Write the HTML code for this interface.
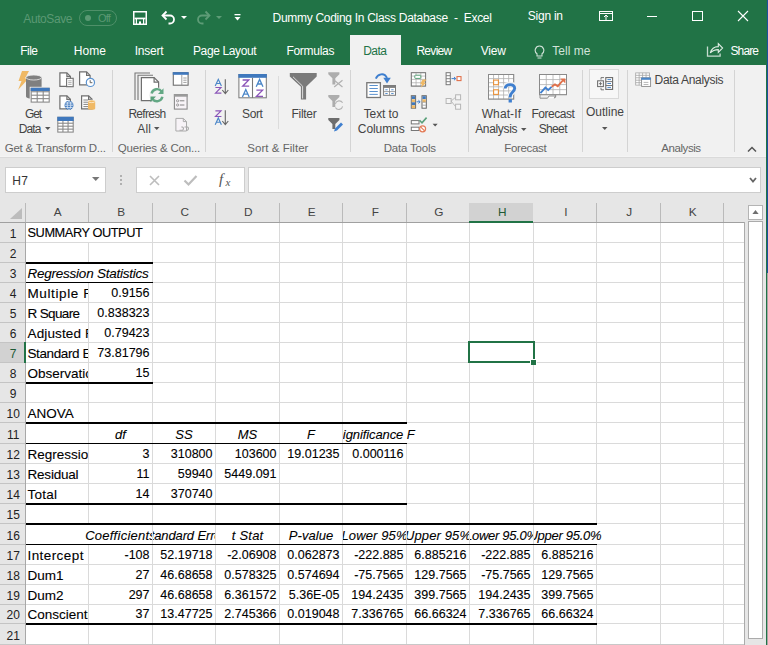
<!DOCTYPE html>
<html><head><meta charset="utf-8"><style>
html,body{margin:0;padding:0;}
body{width:768px;height:645px;overflow:hidden;position:relative;background:#e6e6e6;font-family:"Liberation Sans",sans-serif;}
.t{position:absolute;white-space:nowrap;line-height:1;}
</style></head><body>
<div style="position:absolute;left:0px;top:0px;width:768px;height:65px;background:#217346;"></div>
<div class="t" style="left:23.30px;letter-spacing:-0.405px;top:12.59px;font-size:12px;color:#5b9974;">AutoSave</div>
<div style="position:absolute;left:79px;top:10px;width:38px;height:16px;border:1px solid #4f9069;border-radius:9px;box-sizing:border-box;"></div>
<div style="position:absolute;left:84.5px;top:15px;width:6px;height:6px;border-radius:50%;background:#5b9974;"></div>
<div class="t" style="left:98.00px;letter-spacing:-0.849px;top:12.89px;font-size:11px;color:#5b9974;">Off</div>
<svg style="position:absolute;left:133px;top:11px;" width="14" height="14" viewBox="0 0 14 14"><rect x="0.75" y="0.75" width="12.5" height="12.5" fill="none" stroke="#fff" stroke-width="1.5"/><rect x="1.5" y="6.6" width="11" height="1.7" fill="#fff"/><path d="M3.4 8V13M10.6 8V13" stroke="#fff" stroke-width="1.2"/><rect x="6" y="10.4" width="2" height="2.6" fill="#fff"/></svg>
<svg style="position:absolute;left:160px;top:10px;" width="16" height="15" viewBox="0 0 16 15"><path d="M3 5.5h7a4 4 0 0 1 0 8h-1.5" fill="none" stroke="#fff" stroke-width="1.8"/><path d="M6.5 1.5L2.5 5.5L6.5 9.5" fill="none" stroke="#fff" stroke-width="1.8"/></svg>
<svg style="position:absolute;left:181px;top:16px;" width="6" height="3" viewBox="0 0 6 3"><path d="M0 0h6l-3 3z" fill="#fff"/></svg>
<svg style="position:absolute;left:196px;top:10px;" width="16" height="15" viewBox="0 0 16 15"><path d="M13 5.5h-7a4 4 0 0 0 0 8h1.5" fill="none" stroke="#5e9c77" stroke-width="1.8"/><path d="M9.5 1.5L13.5 5.5L9.5 9.5" fill="none" stroke="#5e9c77" stroke-width="1.8"/></svg>
<svg style="position:absolute;left:216px;top:16px;" width="6" height="3" viewBox="0 0 6 3"><path d="M0 0h6l-3 3z" fill="#5e9c77"/></svg>
<svg style="position:absolute;left:234px;top:14px;" width="7" height="7" viewBox="0 0 7 7"><rect x="0.5" y="0" width="6" height="1.3" fill="#fff"/><path d="M0.5 3h6l-3 3.5z" fill="#fff"/></svg>
<div class="t" style="left:272.50px;letter-spacing:-0.291px;top:11.64px;font-size:12px;color:#fff;">Dummy Coding In Class Database&nbsp; -&nbsp; Excel</div>
<div class="t" style="left:527.80px;letter-spacing:-0.249px;top:10.24px;font-size:12px;color:#fff;">Sign in</div>
<svg style="position:absolute;left:599px;top:11px;" width="14" height="10" viewBox="0 0 14 10"><rect x="0.5" y="0.5" width="13" height="9" fill="none" stroke="#fff" stroke-width="1"/><line x1="0.5" y1="2.5" x2="13.5" y2="2.5" stroke="#fff"/><path d="M7 4v5M5 6l2-2l2 2" fill="none" stroke="#fff" stroke-width="1"/></svg>
<div style="position:absolute;left:647px;top:16px;width:10px;height:1px;background:#fff;"></div>
<div style="position:absolute;left:692px;top:11px;width:11px;height:10px;border:1px solid #fff;box-sizing:border-box;"></div>
<svg style="position:absolute;left:737px;top:10px;" width="12" height="12" viewBox="0 0 12 12"><path d="M1 1L11 11M11 1L1 11" stroke="#fff" stroke-width="1.1"/></svg>
<div style="position:absolute;left:766px;top:0px;width:1px;height:645px;background:#217346;"></div>
<div style="position:absolute;left:767px;top:0px;width:1px;height:273px;background:#1f4f9c;"></div>
<div style="position:absolute;left:767px;top:273px;width:1px;height:372px;background:#a9a4a4;"></div>
<div style="position:absolute;left:350px;top:35px;width:51px;height:30px;background:#f1f1f1;"></div>
<div class="t" style="left:20.30px;letter-spacing:-0.577px;top:44.84px;font-size:12px;color:#fff;">File</div>
<div class="t" style="left:73.80px;letter-spacing:0.061px;top:44.84px;font-size:12px;color:#fff;">Home</div>
<div class="t" style="left:134.70px;letter-spacing:-0.242px;top:44.84px;font-size:12px;color:#fff;">Insert</div>
<div class="t" style="left:193.00px;letter-spacing:-0.379px;top:44.84px;font-size:12px;color:#fff;">Page Layout</div>
<div class="t" style="left:286.40px;letter-spacing:-0.274px;top:44.84px;font-size:12px;color:#fff;">Formulas</div>
<div class="t" style="left:416.40px;letter-spacing:-0.697px;top:44.84px;font-size:12px;color:#fff;">Review</div>
<div class="t" style="left:480.70px;letter-spacing:-0.175px;top:44.84px;font-size:12px;color:#fff;">View</div>
<div class="t" style="left:552.30px;letter-spacing:0.014px;top:44.84px;font-size:12px;color:#d2e3d9;">Tell me</div>
<div class="t" style="left:730.50px;letter-spacing:-0.879px;top:44.84px;font-size:12px;color:#fff;">Share</div>
<div class="t" style="left:363.20px;letter-spacing:-0.519px;top:44.84px;font-size:12px;color:#217346;">Data</div>
<svg style="position:absolute;left:534px;top:45px;" width="11" height="15" viewBox="0 0 11 15"><path d="M5.5 1a4.3 4.3 0 0 0-2.5 7.8V11h5V8.8A4.3 4.3 0 0 0 5.5 1z" fill="none" stroke="#d2e3d9" stroke-width="1.1"/><line x1="3.5" y1="13" x2="7.5" y2="13" stroke="#d2e3d9"/></svg>
<svg style="position:absolute;left:706px;top:42px;" width="18" height="16" viewBox="0 0 18 16"><path d="M1.5 4.5V14.2H14.1V11.5" fill="none" stroke="#c5dccf" stroke-width="1.3"/><path d="M4.3 11C5.5 6.5 8.5 4.6 12.3 4.6V1.6L16.6 6L12.3 10.4V7.6C9.3 7.6 6.5 8.5 4.3 11Z" fill="none" stroke="#e2eee7" stroke-width="1.1"/></svg>
<div style="position:absolute;left:0px;top:65px;width:766px;height:91px;background:#f1f1f1;"></div>
<div style="position:absolute;left:0px;top:156px;width:766px;height:1px;background:#f4f4f4;"></div>
<div style="position:absolute;left:0px;top:157px;width:766px;height:1px;background:#dadada;"></div>
<div style="position:absolute;left:0px;top:158px;width:766px;height:45px;background:#e6e6e6;"></div>
<div style="position:absolute;left:112px;top:70px;width:1px;height:82px;background:#d4d4d4;"></div>
<div style="position:absolute;left:205px;top:70px;width:1px;height:82px;background:#d4d4d4;"></div>
<div style="position:absolute;left:350px;top:70px;width:1px;height:82px;background:#d4d4d4;"></div>
<div style="position:absolute;left:468px;top:70px;width:1px;height:82px;background:#d4d4d4;"></div>
<div style="position:absolute;left:582px;top:70px;width:1px;height:82px;background:#d4d4d4;"></div>
<div style="position:absolute;left:627px;top:70px;width:1px;height:82px;background:#d4d4d4;"></div>
<div style="position:absolute;left:734px;top:70px;width:1px;height:82px;background:#d4d4d4;"></div>
<div style="position:absolute;left:278px;top:76px;width:1px;height:53px;background:#dcdcdc;"></div>
<div class="t" style="left:4.70px;letter-spacing:-0.218px;top:143.07px;font-size:11.5px;color:#666;">Get &amp; Transform D...</div>
<div class="t" style="left:117.80px;letter-spacing:-0.167px;top:143.07px;font-size:11.5px;color:#666;">Queries &amp; Con...</div>
<div class="t" style="left:247.30px;letter-spacing:0.033px;top:143.07px;font-size:11.5px;color:#666;">Sort &amp; Filter</div>
<div class="t" style="left:383.70px;letter-spacing:-0.192px;top:143.07px;font-size:11.5px;color:#666;">Data Tools</div>
<div class="t" style="left:504.30px;letter-spacing:-0.334px;top:143.07px;font-size:11.5px;color:#666;">Forecast</div>
<div class="t" style="left:661.30px;letter-spacing:-0.432px;top:143.07px;font-size:11.5px;color:#666;">Analysis</div>
<div class="t" style="left:25.00px;letter-spacing:-1.072px;top:107.54px;font-size:12px;color:#444;">Get</div>
<div class="t" style="left:18.75px;letter-spacing:-0.902px;top:123.14px;font-size:12px;color:#444;">Data</div>
<div class="t" style="left:128.40px;letter-spacing:-0.694px;top:107.54px;font-size:12px;color:#444;">Refresh</div>
<div class="t" style="left:137.30px;letter-spacing:0.184px;top:123.14px;font-size:12px;color:#444;">All</div>
<div class="t" style="left:242.00px;letter-spacing:-0.369px;top:107.54px;font-size:12px;color:#444;">Sort</div>
<div class="t" style="left:291.40px;letter-spacing:-0.253px;top:107.54px;font-size:12px;color:#444;">Filter</div>
<div class="t" style="left:363.70px;letter-spacing:-0.109px;top:107.54px;font-size:12px;color:#444;">Text to</div>
<div class="t" style="left:357.80px;letter-spacing:-0.075px;top:123.14px;font-size:12px;color:#444;">Columns</div>
<div class="t" style="left:481.70px;letter-spacing:0.100px;top:107.54px;font-size:12px;color:#444;">What-If</div>
<div class="t" style="left:475.20px;letter-spacing:-0.341px;top:123.14px;font-size:12px;color:#444;">Analysis</div>
<div class="t" style="left:531.40px;letter-spacing:-0.469px;top:107.54px;font-size:12px;color:#444;">Forecast</div>
<div class="t" style="left:538.70px;letter-spacing:-0.639px;top:123.14px;font-size:12px;color:#444;">Sheet</div>
<div class="t" style="left:586.00px;letter-spacing:-0.003px;top:106.04px;font-size:12px;color:#444;">Outline</div>
<div class="t" style="left:654.60px;letter-spacing:-0.317px;top:73.84px;font-size:12px;color:#444;">Data Analysis</div>
<svg style="position:absolute;left:44.5px;top:127.4px;" width="6" height="3.5" viewBox="0 0 6 3.5"><path d="M0 0h5.5l-2.75 3z" fill="#555"/></svg>
<svg style="position:absolute;left:153.5px;top:127.4px;" width="6" height="3.5" viewBox="0 0 6 3.5"><path d="M0 0h5.5l-2.75 3z" fill="#555"/></svg>
<svg style="position:absolute;left:521px;top:127.6px;" width="6" height="3.5" viewBox="0 0 6 3.5"><path d="M0 0h5.5l-2.75 3z" fill="#555"/></svg>
<svg style="position:absolute;left:602px;top:127px;" width="6" height="3.5" viewBox="0 0 6 3.5"><path d="M0 0h5.5l-2.75 3z" fill="#555"/></svg>
<svg style="position:absolute;left:747px;top:146px;" width="10" height="6" viewBox="0 0 10 6"><path d="M1 5.5L5 1.5L9 5.5" fill="none" stroke="#555" stroke-width="1.5"/></svg>
<div style="position:absolute;left:589px;top:69px;width:30px;height:30px;border:1px solid #d9d9d9;background:#f7f7f7;box-sizing:border-box;"></div>
<svg style="position:absolute;left:0;top:0;" width="768" height="160" viewBox="0 0 768 160"><path d="M22 71H29L25 78.5H28.5L18 90L21.5 81H18.5Z" fill="#f0b965"/><path d="M26 77.5V96.5A7.8 2.5 0 0 0 41.6 96.5V77.5Z" fill="#7f7f7f"/><ellipse cx="33.8" cy="77.5" rx="7.8" ry="2.5" fill="#808080" stroke="#eee" stroke-width="0.8"/><rect x="29.7" y="86.8" width="21" height="16.6" fill="#f1f1f1"/><rect x="31.2" y="88.3" width="18" height="13.8" fill="#fff" stroke="#8a8a8a" stroke-width="1.1"/><line x1="37.20" y1="88.3" x2="37.20" y2="102.1" stroke="#8a8a8a" stroke-width="1.1"/><line x1="43.20" y1="88.3" x2="43.20" y2="102.1" stroke="#8a8a8a" stroke-width="1.1"/><line x1="31.2" y1="91.75" x2="49.2" y2="91.75" stroke="#8a8a8a" stroke-width="1.1"/><line x1="31.2" y1="95.20" x2="49.2" y2="95.20" stroke="#8a8a8a" stroke-width="1.1"/><line x1="31.2" y1="98.65" x2="49.2" y2="98.65" stroke="#8a8a8a" stroke-width="1.1"/><rect x="30.7" y="87.8" width="19" height="3.2" fill="#3f78bd"/><path d="M59.9 72.9H66.9L70.4 76.4V86.4H59.9Z" fill="#fff" stroke="#6f6f6f" stroke-width="1.2"/><path d="M66.9 72.9V76.4H70.4" fill="none" stroke="#6f6f6f" stroke-width="1.2"/><rect x="66.6" y="78.3" width="6.6" height="8.4" fill="#fff" stroke="#6f6f6f" stroke-width="1.1"/><path d="M68.2 80.8h3.4M68.2 82.6h3.4M68.2 84.4h3.4" stroke="#999" stroke-width="0.8"/><path d="M79.6 71.9H86.6L90.1 75.4V84.9H79.6Z" fill="#fff" stroke="#6f6f6f" stroke-width="1.2"/><path d="M86.6 71.9V75.4H90.1" fill="none" stroke="#6f6f6f" stroke-width="1.2"/><circle cx="90.4" cy="82.4" r="4.1" fill="#fff" stroke="#5b93d0" stroke-width="1.2"/><path d="M90.2 80.2V82.7H92.4" fill="none" stroke="#555" stroke-width="0.9"/><path d="M59.9 95.8H66.9L70.4 99.3V108.8H59.9Z" fill="#fff" stroke="#6f6f6f" stroke-width="1.2"/><path d="M66.9 95.8V99.3H70.4" fill="none" stroke="#6f6f6f" stroke-width="1.2"/><circle cx="69" cy="105.2" r="4.5" fill="#3f78bd"/><path d="M64.6 105.2H73.4M65.3 103H72.7M65.3 107.4H72.7" stroke="#dbe7f5" stroke-width="0.9"/><ellipse cx="69" cy="105.2" rx="1.8" ry="4.4" fill="none" stroke="#dbe7f5" stroke-width="0.8"/><path d="M81.6 95.8H88.6L92.1 99.3V108.8H81.6Z" fill="#fff" stroke="#6f6f6f" stroke-width="1.2"/><path d="M88.6 95.8V99.3H92.1" fill="none" stroke="#6f6f6f" stroke-width="1.2"/><path d="M83.4 100h5M83.4 102.2h5M83.4 104.4h5M83.4 106.6h5" stroke="#777" stroke-width="0.9"/><path d="M88 101.3V108.4A3.6 1.3 0 0 0 95.2 108.4V101.3Z" fill="#f0b965"/><ellipse cx="91.6" cy="101.3" rx="3.6" ry="1.3" fill="#f0b965" stroke="#fff" stroke-width="0.6"/><rect x="57.8" y="117.3" width="15.4" height="14.8" fill="#fff" stroke="#8a8a8a" stroke-width="1.1"/><line x1="62.93" y1="117.3" x2="62.93" y2="132.1" stroke="#8a8a8a" stroke-width="1.1"/><line x1="68.07" y1="117.3" x2="68.07" y2="132.1" stroke="#8a8a8a" stroke-width="1.1"/><line x1="57.8" y1="120.26" x2="73.2" y2="120.26" stroke="#8a8a8a" stroke-width="1.1"/><line x1="57.8" y1="123.22" x2="73.2" y2="123.22" stroke="#8a8a8a" stroke-width="1.1"/><line x1="57.8" y1="126.18" x2="73.2" y2="126.18" stroke="#8a8a8a" stroke-width="1.1"/><line x1="57.8" y1="129.14" x2="73.2" y2="129.14" stroke="#8a8a8a" stroke-width="1.1"/><rect x="57.3" y="116.8" width="16.4" height="4.2" fill="#3f78bd"/><path d="M135 100V73H150" fill="none" stroke="#777" stroke-width="1.1"/><path d="M138 100V75.3H153" fill="none" stroke="#777" stroke-width="1.1"/><path d="M141.4 77.6H154.1L158.6 82.1V100.6H141.4Z" fill="#fff" stroke="#6f6f6f" stroke-width="1.2"/><path d="M154.1 77.6V82.1H158.6" fill="none" stroke="#6f6f6f" stroke-width="1.2"/><circle cx="157" cy="95.2" r="7.8" fill="#f1f1f1"/><path d="M151.6 93.6A5.6 5.6 0 0 1 161.7 91.6" fill="none" stroke="#63a884" stroke-width="2.4"/><path d="M163.5 88.2V94H158Z" fill="#63a884"/><path d="M162.4 96.8A5.6 5.6 0 0 1 152.3 98.8" fill="none" stroke="#63a884" stroke-width="2.4"/><path d="M150.5 102.2V96.4H156Z" fill="#5aa07a"/><rect x="173.3" y="72.7" width="14.8" height="12.5" fill="#fff" stroke="#6f6f6f" stroke-width="1.1"/><rect x="172.8" y="72.2" width="15.8" height="2.6" fill="#3f78bd"/><path d="M181.8 75V85.2M183.3 78h3.3M183.3 80.2h3.3M183.3 82.4h3.3" stroke="#888" stroke-width="0.8"/><rect x="174.4" y="94.6" width="12.7" height="14.5" fill="#f7f3f7" stroke="#8a8a8a" stroke-width="1.1"/><rect x="173.9" y="94.1" width="13.7" height="2.6" fill="#9a9a9a"/><circle cx="177.6" cy="100.8" r="1.1" fill="none" stroke="#888" stroke-width="0.8"/><circle cx="177.6" cy="105" r="1.1" fill="none" stroke="#888" stroke-width="0.8"/><path d="M179.8 100.8h4.6M179.8 105h4.6" stroke="#777" stroke-width="0.9"/><path d="M175.9 118.4H183.3L186.5 121.60000000000001V131.0H175.9Z" fill="#f7f3f7" stroke="#aaa" stroke-width="1"/><path d="M183.3 118.4V121.60000000000001H186.5" fill="none" stroke="#aaa" stroke-width="1"/><path d="M179.5 130.2h3a1.8 1.8 0 0 0 0-3.2h-1.2M184.5 127h3a1.8 1.8 0 0 1 0 3.2h-1.2" fill="none" stroke="#aaa" stroke-width="1.1"/><path d="M215.2 86.1L218.29999999999998 79.3L221.39999999999998 86.1M216.564 83.51599999999999H220.036" fill="none" stroke="#4a86c8" stroke-width="1.15"/><path d="M215.39999999999998 87.5H220.99999999999997L215.5 93.10000000000001H221.39999999999998" fill="none" stroke="#8b55b8" stroke-width="1.15"/><path d="M225.3 79.2V93.2M222.3 90L225.3 93.6L228.3 90" fill="none" stroke="#666" stroke-width="1.1"/><path d="M215.39999999999998 110.89999999999999H220.99999999999997L215.5 116.5H221.39999999999998" fill="none" stroke="#8b55b8" stroke-width="1.15"/><path d="M215.2 124.8L218.29999999999998 118L221.39999999999998 124.8M216.564 122.216H220.036" fill="none" stroke="#4a86c8" stroke-width="1.15"/><path d="M225.3 110.2V124.2M222.3 121L225.3 124.6L228.3 121" fill="none" stroke="#666" stroke-width="1.1"/><rect x="238.9" y="74.5" width="27.4" height="23.3" fill="#fff" stroke="#777" stroke-width="1"/><rect x="238.4" y="74" width="28.4" height="3.8" fill="#3f78bd"/><line x1="252.5" y1="77.8" x2="252.5" y2="98" stroke="#777" stroke-width="1.1"/><path d="M242.6 80.0H248.8L242.70000000000002 86.20000000000002H249.20000000000002" fill="none" stroke="#8b55b8" stroke-width="1.3"/><path d="M242.4 97.0L245.8 89.6L249.20000000000002 97.0M243.89600000000002 94.18799999999999H247.704" fill="none" stroke="#4a86c8" stroke-width="1.3"/><path d="M256.2 86.80000000000001L259.59999999999997 79.4L263.0 86.80000000000001M257.69599999999997 83.988H261.50399999999996" fill="none" stroke="#4a86c8" stroke-width="1.3"/><path d="M256.4 90.19999999999999H262.6L256.5 96.4H263.0" fill="none" stroke="#8b55b8" stroke-width="1.3"/><path d="M289.8 73.1H316.7V76.4L306.1 86.7V99.6H300.9V86.7L289.8 76.4Z" fill="#7a7a7a"/><path d="M293 76.8L302.6 86.2V98.5" fill="none" stroke="#e8e8e8" stroke-width="0.9"/><path d="M328.3 72.2H339.4V74.2L335.3 78.3V84.5H332.4V78.3L328.3 74.2Z" fill="#adadad"/><path d="M334.2 80.2L342.5 87M342.5 80.2L334.2 87" stroke="#b0b0b0" stroke-width="1.2"/><path d="M328.3 94.9H339.4V96.9L335.3 101V107H332.4V101L328.3 96.9Z" fill="#adadad"/><path d="M335.4 104A3.9 3.9 0 0 1 342.6 102.8M342.6 106.3A3.9 3.9 0 0 1 335.4 107.5" fill="none" stroke="#b5b5b5" stroke-width="1.1"/><path d="M328.3 118H339.4V120L335.3 124.1V129H332.4V124.1L328.3 120Z" fill="#6d6d6d"/><path d="M334 131.6L335 128.6L341 122.6L343 124.6L337 130.6Z" fill="#3f7fcf"/><rect x="366.8" y="82.7" width="13.6" height="14.8" fill="#fff" stroke="#777" stroke-width="1.3"/><path d="M369.4 85.5h8.4M369.4 88.5h8.4M369.4 91.5h8.4M369.4 94.4h8.4" stroke="#4a86c8" stroke-width="0.9"/><rect x="383.6" y="85.5" width="11.9" height="9.8" fill="#fff" stroke="#7a7a7a" stroke-width="1"/><rect x="383.2" y="85.1" width="12.7" height="2.8" fill="#7d7d7d"/><line x1="389.5" y1="88" x2="389.5" y2="95.4" stroke="#888" stroke-width="0.8"/><line x1="383.4" y1="91.6" x2="395.6" y2="91.6" stroke="#888" stroke-width="0.8"/><path d="M385.3 89.8h2.4M391.2 89.8h2.4M385.3 93.5h2.4M391.2 93.5h2.4" stroke="#4a86c8" stroke-width="0.9"/><path d="M375.8 78.6C377.5 74.5 384 71.6 387 78" fill="none" stroke="#3f7fcf" stroke-width="1.9"/><path d="M383.3 77.7L387 83.5L390.8 77.7Z" fill="#3f7fcf"/><rect x="411.3" y="72.7" width="14.3" height="13.4" fill="#fff" stroke="#a8a8a8" stroke-width="0.7"/><line x1="416.07" y1="72.7" x2="416.07" y2="86.10000000000001" stroke="#a8a8a8" stroke-width="0.7"/><line x1="420.83" y1="72.7" x2="420.83" y2="86.10000000000001" stroke="#a8a8a8" stroke-width="0.7"/><line x1="411.3" y1="76.05" x2="425.6" y2="76.05" stroke="#a8a8a8" stroke-width="0.7"/><line x1="411.3" y1="79.40" x2="425.6" y2="79.40" stroke="#a8a8a8" stroke-width="0.7"/><line x1="411.3" y1="82.75" x2="425.6" y2="82.75" stroke="#a8a8a8" stroke-width="0.7"/><rect x="411.3" y="72.7" width="14.3" height="13.4" fill="none" stroke="#7a7a7a" stroke-width="1"/><rect x="414.8" y="75.2" width="6" height="3.2" rx="0.6" fill="#fff" stroke="#58a077" stroke-width="1"/><path d="M422.5 79.5H426.5L424 83H426L420.8 87.8L422 84.2H420.2Z" fill="#f0b965"/><rect x="411.3" y="95.7" width="4.3" height="12.5" fill="#fff" stroke="#666" stroke-width="1"/><rect x="411.8" y="96.2" width="3.3" height="2.9" fill="#3f78bd"/><rect x="411.8" y="99.3" width="3.3" height="2.9" fill="#f0b965"/><rect x="411.8" y="102.3" width="3.3" height="2.9" fill="#3f78bd"/><rect x="411.8" y="105.3" width="3.3" height="2.9" fill="#f0b965"/><rect x="422" y="95.7" width="4.3" height="12.5" fill="#fff" stroke="#666" stroke-width="1"/><rect x="422.5" y="96.2" width="3.3" height="2.9" fill="#3f78bd"/><rect x="422.5" y="99.3" width="3.3" height="2.9" fill="#f0b965"/><path d="M422.5 102.2h3.3M422.5 105.2h3.3" stroke="#888" stroke-width="0.7"/><path d="M416.6 101.8h3.4M418.4 100.2l1.8 1.6l-1.8 1.6" fill="none" stroke="#3f7fcf" stroke-width="1"/><rect x="411.3" y="120.6" width="7.7" height="3.3" fill="#fff" stroke="#777" stroke-width="1"/><rect x="411.3" y="127.2" width="7.7" height="3.3" fill="#fff" stroke="#777" stroke-width="1"/><path d="M419.5 120.3L422 122.8L426.6 117.6" fill="none" stroke="#5aa07a" stroke-width="1.6"/><circle cx="422.6" cy="128.8" r="3" fill="#fff" stroke="#e37a55" stroke-width="1.2"/><path d="M420.6 126.8L424.6 130.8" stroke="#e37a55" stroke-width="1.1"/><path d="M432.6 123.8H437.7L435.15 126.5Z" fill="#555"/><rect x="446.1" y="72.7" width="4.2" height="12" fill="#fff" stroke="#777" stroke-width="1"/><path d="M446.1 75.7h4.2M446.1 78.7h4.2M446.1 81.7h4.2" stroke="#777" stroke-width="0.9"/><path d="M451.5 78.6h4M454 77l1.8 1.6L454 80.2" fill="none" stroke="#3f7fcf" stroke-width="1"/><rect x="457" y="76.6" width="4" height="4" fill="#fff" stroke="#e0704a" stroke-width="1.1"/><rect x="446.1" y="98.5" width="5" height="5" fill="#f5f5f5" stroke="#b5b5b5" stroke-width="1"/><rect x="455.6" y="94.8" width="5" height="5" fill="#f5f5f5" stroke="#b5b5b5" stroke-width="1"/><rect x="455.6" y="104.2" width="5" height="5" fill="#f5f5f5" stroke="#b5b5b5" stroke-width="1"/><path d="M451.1 101L455.6 97.3M451.1 101L455.6 106.7" stroke="#b5b5b5" stroke-width="0.9"/><rect x="488.5" y="74.5" width="25.2" height="24.6" fill="#fff" stroke="#b0b0b0" stroke-width="0.8"/><line x1="493.54" y1="74.5" x2="493.54" y2="99.1" stroke="#b0b0b0" stroke-width="0.8"/><line x1="498.58" y1="74.5" x2="498.58" y2="99.1" stroke="#b0b0b0" stroke-width="0.8"/><line x1="503.62" y1="74.5" x2="503.62" y2="99.1" stroke="#b0b0b0" stroke-width="0.8"/><line x1="508.66" y1="74.5" x2="508.66" y2="99.1" stroke="#b0b0b0" stroke-width="0.8"/><line x1="488.5" y1="78.60" x2="513.7" y2="78.60" stroke="#b0b0b0" stroke-width="0.8"/><line x1="488.5" y1="82.70" x2="513.7" y2="82.70" stroke="#b0b0b0" stroke-width="0.8"/><line x1="488.5" y1="86.80" x2="513.7" y2="86.80" stroke="#b0b0b0" stroke-width="0.8"/><line x1="488.5" y1="90.90" x2="513.7" y2="90.90" stroke="#b0b0b0" stroke-width="0.8"/><line x1="488.5" y1="95.00" x2="513.7" y2="95.00" stroke="#b0b0b0" stroke-width="0.8"/><rect x="488.5" y="74.5" width="25.2" height="24.6" fill="none" stroke="#8a8a8a" stroke-width="1"/><rect x="493.6" y="80.1" width="4.8" height="4.6" fill="#fff" stroke="#e8913a" stroke-width="1.1"/><rect x="493.6" y="89.8" width="4.8" height="4.6" fill="#fff" stroke="#e8913a" stroke-width="1.1"/><path d="M504.6 88.5C504.6 82.5 515.3 82.3 515.3 88.3C515.3 92 510.2 92.3 510.2 96.4" fill="none" stroke="#f1f1f1" stroke-width="5"/><path d="M505.2 88.5C505.2 83.5 514.7 83.3 514.7 88.3C514.7 91.7 510.2 92.3 510.2 96.4V97.5" fill="none" stroke="#3f7fcf" stroke-width="2.9"/><rect x="508.6" y="99.2" width="3.3" height="3.3" fill="#3f7fcf"/><rect x="539.5" y="74.5" width="27" height="20.2" fill="#fff" stroke="#b0b0b0" stroke-width="0.8"/><line x1="546.25" y1="74.5" x2="546.25" y2="94.7" stroke="#b0b0b0" stroke-width="0.8"/><line x1="553.00" y1="74.5" x2="553.00" y2="94.7" stroke="#b0b0b0" stroke-width="0.8"/><line x1="559.75" y1="74.5" x2="559.75" y2="94.7" stroke="#b0b0b0" stroke-width="0.8"/><line x1="539.5" y1="79.55" x2="566.5" y2="79.55" stroke="#b0b0b0" stroke-width="0.8"/><line x1="539.5" y1="84.60" x2="566.5" y2="84.60" stroke="#b0b0b0" stroke-width="0.8"/><line x1="539.5" y1="89.65" x2="566.5" y2="89.65" stroke="#b0b0b0" stroke-width="0.8"/><rect x="539.5" y="74.5" width="27" height="20.2" fill="none" stroke="#8a8a8a" stroke-width="1"/><path d="M540 98.2H547.5L549 96H556L554.5 98.2" fill="#fff" stroke="#8f8f8f" stroke-width="1"/><path d="M540 94.8V98.2M556 94.8L554.5 98.2" stroke="#8f8f8f" stroke-width="1"/><path d="M540.4 93.2L545.4 87.6L548.2 90L551.6 86.8" fill="none" stroke="#3f7fcf" stroke-width="1.8"/><path d="M551.6 86.8L555 84.4L557.8 86.2L563.6 79.5" fill="none" stroke="#e0704a" stroke-width="1.8"/><path d="M560.2 78.4H565.4V83.6Z" fill="#e0704a"/><rect x="597.6" y="80.8" width="5.8" height="5.8" fill="#f7f7f7" stroke="#6a6a6a" stroke-width="1"/><path d="M598.9 83.7h3.2M600.5 82.1v3.2" stroke="#6a6a6a" stroke-width="0.9"/><path d="M601 79.6V77.6H604M601 87.8V89.8H604" fill="none" stroke="#6a6a6a" stroke-width="0.9"/><rect x="605.8" y="77.6" width="6.8" height="11.8" fill="#fff" stroke="#6a6a6a" stroke-width="1.1"/><path d="M605.8 81.6h6.8M605.8 85.5h6.8" stroke="#6a6a6a" stroke-width="0.9"/><path d="M607.4 79.6h3.6M607.4 83.5h3.6M607.4 87.4h3.6" stroke="#4a86c8" stroke-width="1"/><rect x="635.7" y="72.9" width="13.8" height="12.2" fill="#fff" stroke="#a5a5a5" stroke-width="0.8"/><line x1="639.15" y1="72.9" x2="639.15" y2="85.10000000000001" stroke="#a5a5a5" stroke-width="0.8"/><line x1="642.60" y1="72.9" x2="642.60" y2="85.10000000000001" stroke="#a5a5a5" stroke-width="0.8"/><line x1="646.05" y1="72.9" x2="646.05" y2="85.10000000000001" stroke="#a5a5a5" stroke-width="0.8"/><line x1="635.7" y1="75.34" x2="649.5" y2="75.34" stroke="#a5a5a5" stroke-width="0.8"/><line x1="635.7" y1="77.78" x2="649.5" y2="77.78" stroke="#a5a5a5" stroke-width="0.8"/><line x1="635.7" y1="80.22" x2="649.5" y2="80.22" stroke="#a5a5a5" stroke-width="0.8"/><line x1="635.7" y1="82.66" x2="649.5" y2="82.66" stroke="#a5a5a5" stroke-width="0.8"/><rect x="641.6" y="78" width="9" height="8.4" fill="#fff" stroke="#8a8a8a" stroke-width="0.9"/><rect x="641.2" y="77.6" width="9.7" height="2.2" fill="#4a86c8"/><path d="M643.6 82.4h4.8M643.6 84.5h4.8" stroke="#999" stroke-width="0.7"/></svg>
<div style="position:absolute;left:5px;top:167px;width:101px;height:26px;background:#fff;border:1px solid #cdcdcd;box-sizing:border-box;"></div>
<div class="t" style="left:12.20px;letter-spacing:0.364px;top:175.34px;font-size:12px;color:#333;">H7</div>
<svg style="position:absolute;left:92px;top:177px;" width="8" height="4" viewBox="0 0 8 4"><path d="M0 0h7.5l-3.75 4z" fill="#777"/></svg>
<div style="position:absolute;left:120px;top:175px;width:2px;height:2px;background:#b0b0b0;"></div>
<div style="position:absolute;left:120px;top:179px;width:2px;height:2px;background:#b0b0b0;"></div>
<div style="position:absolute;left:120px;top:183px;width:2px;height:2px;background:#b0b0b0;"></div>
<div style="position:absolute;left:136px;top:167px;width:109px;height:26px;background:#fff;border:1px solid #cdcdcd;box-sizing:border-box;"></div>
<svg style="position:absolute;left:148px;top:174px;" width="13" height="13" viewBox="0 0 13 13"><path d="M2 2L11 11M11 2L2 11" stroke="#bdbdbd" stroke-width="1.6"/></svg>
<svg style="position:absolute;left:183px;top:174px;" width="15" height="13" viewBox="0 0 15 13"><path d="M1.5 6.5L5.5 10.5L13.5 2" fill="none" stroke="#bdbdbd" stroke-width="2.2"/></svg>
<div class="t" style="left:219px;top:172px;font-size:15px;color:#555;font-family:'Liberation Serif',serif;font-style:italic;">f</div>
<div class="t" style="left:225.5px;top:177px;font-size:11px;color:#555;font-family:'Liberation Serif',serif;font-style:italic;">x</div>
<div style="position:absolute;left:248px;top:167px;width:513px;height:26px;background:#fff;border:1px solid #cdcdcd;box-sizing:border-box;"></div>
<svg style="position:absolute;left:749px;top:177px;" width="8" height="6" viewBox="0 0 8 6"><path d="M1 1L4 4.5L7 1" fill="none" stroke="#666" stroke-width="1.8"/></svg>
<div style="position:absolute;left:25px;top:222px;width:719px;height:423px;background:#fff;"></div>
<div style="position:absolute;left:88px;top:223px;width:1px;height:422px;background:#dadada;"></div>
<div style="position:absolute;left:152px;top:223px;width:1px;height:422px;background:#dadada;"></div>
<div style="position:absolute;left:215px;top:223px;width:1px;height:422px;background:#dadada;"></div>
<div style="position:absolute;left:279px;top:223px;width:1px;height:422px;background:#dadada;"></div>
<div style="position:absolute;left:342px;top:223px;width:1px;height:422px;background:#dadada;"></div>
<div style="position:absolute;left:406px;top:223px;width:1px;height:422px;background:#dadada;"></div>
<div style="position:absolute;left:469px;top:223px;width:1px;height:422px;background:#dadada;"></div>
<div style="position:absolute;left:533px;top:223px;width:1px;height:422px;background:#dadada;"></div>
<div style="position:absolute;left:596px;top:223px;width:1px;height:422px;background:#dadada;"></div>
<div style="position:absolute;left:660px;top:223px;width:1px;height:422px;background:#dadada;"></div>
<div style="position:absolute;left:723px;top:223px;width:1px;height:422px;background:#dadada;"></div>
<div style="position:absolute;left:26px;top:242px;width:718px;height:1px;background:#dadada;"></div>
<div style="position:absolute;left:26px;top:262px;width:718px;height:1px;background:#dadada;"></div>
<div style="position:absolute;left:26px;top:282px;width:718px;height:1px;background:#dadada;"></div>
<div style="position:absolute;left:26px;top:302px;width:718px;height:1px;background:#dadada;"></div>
<div style="position:absolute;left:26px;top:322px;width:718px;height:1px;background:#dadada;"></div>
<div style="position:absolute;left:26px;top:342px;width:718px;height:1px;background:#dadada;"></div>
<div style="position:absolute;left:26px;top:362px;width:718px;height:1px;background:#dadada;"></div>
<div style="position:absolute;left:26px;top:382px;width:718px;height:1px;background:#dadada;"></div>
<div style="position:absolute;left:26px;top:402px;width:718px;height:1px;background:#dadada;"></div>
<div style="position:absolute;left:26px;top:422px;width:718px;height:1px;background:#dadada;"></div>
<div style="position:absolute;left:26px;top:443px;width:718px;height:1px;background:#dadada;"></div>
<div style="position:absolute;left:26px;top:463px;width:718px;height:1px;background:#dadada;"></div>
<div style="position:absolute;left:26px;top:483px;width:718px;height:1px;background:#dadada;"></div>
<div style="position:absolute;left:26px;top:503px;width:718px;height:1px;background:#dadada;"></div>
<div style="position:absolute;left:26px;top:523px;width:718px;height:1px;background:#dadada;"></div>
<div style="position:absolute;left:26px;top:544px;width:718px;height:1px;background:#dadada;"></div>
<div style="position:absolute;left:26px;top:564px;width:718px;height:1px;background:#dadada;"></div>
<div style="position:absolute;left:26px;top:584px;width:718px;height:1px;background:#dadada;"></div>
<div style="position:absolute;left:26px;top:604px;width:718px;height:1px;background:#dadada;"></div>
<div style="position:absolute;left:26px;top:623px;width:718px;height:1px;background:#dadada;"></div>
<div style="position:absolute;left:26px;top:644px;width:718px;height:1px;background:#dadada;"></div>
<div style="position:absolute;left:25px;top:203px;width:719px;height:19px;background:#e6e6e6;"></div>
<div style="position:absolute;left:469px;top:203px;width:64px;height:19px;background:#d2d2d2;"></div>
<div style="position:absolute;left:88px;top:203px;width:1px;height:19px;background:#bababa;"></div>
<div style="position:absolute;left:152px;top:203px;width:1px;height:19px;background:#bababa;"></div>
<div style="position:absolute;left:215px;top:203px;width:1px;height:19px;background:#bababa;"></div>
<div style="position:absolute;left:279px;top:203px;width:1px;height:19px;background:#bababa;"></div>
<div style="position:absolute;left:342px;top:203px;width:1px;height:19px;background:#bababa;"></div>
<div style="position:absolute;left:406px;top:203px;width:1px;height:19px;background:#bababa;"></div>
<div style="position:absolute;left:596px;top:203px;width:1px;height:19px;background:#bababa;"></div>
<div style="position:absolute;left:660px;top:203px;width:1px;height:19px;background:#bababa;"></div>
<div style="position:absolute;left:723px;top:203px;width:1px;height:19px;background:#bababa;"></div>
<div style="position:absolute;left:25px;top:203px;width:1px;height:19px;background:#bababa;"></div>
<div style="position:absolute;left:0px;top:222px;width:744px;height:1px;background:#a0a0a0;"></div>
<div style="position:absolute;left:469px;top:221px;width:64px;height:2px;background:#217346;"></div>
<div class="t" style="left:27.80px;width:60px;text-align:center;top:207.31px;font-size:11.8px;color:#444;">A</div>
<div class="t" style="left:91.30px;width:60px;text-align:center;top:207.31px;font-size:11.8px;color:#444;">B</div>
<div class="t" style="left:154.80px;width:60px;text-align:center;top:207.31px;font-size:11.8px;color:#444;">C</div>
<div class="t" style="left:218.30px;width:60px;text-align:center;top:207.31px;font-size:11.8px;color:#444;">D</div>
<div class="t" style="left:281.80px;width:60px;text-align:center;top:207.31px;font-size:11.8px;color:#444;">E</div>
<div class="t" style="left:345.30px;width:60px;text-align:center;top:207.31px;font-size:11.8px;color:#444;">F</div>
<div class="t" style="left:408.80px;width:60px;text-align:center;top:207.31px;font-size:11.8px;color:#444;">G</div>
<div class="t" style="left:472.30px;width:60px;text-align:center;top:207.31px;font-size:11.8px;color:#1e5a35;">H</div>
<div class="t" style="left:535.80px;width:60px;text-align:center;top:207.31px;font-size:11.8px;color:#444;">I</div>
<div class="t" style="left:599.30px;width:60px;text-align:center;top:207.31px;font-size:11.8px;color:#444;">J</div>
<div class="t" style="left:662.80px;width:60px;text-align:center;top:207.31px;font-size:11.8px;color:#444;">K</div>
<svg style="position:absolute;left:10px;top:208px;" width="12" height="11" viewBox="0 0 12 11"><path d="M12 0V11H0z" fill="#bcbcbc"/></svg>
<div style="position:absolute;left:0px;top:223px;width:25px;height:422px;background:#e6e6e6;"></div>
<div style="position:absolute;left:0px;top:343px;width:24px;height:19px;background:#d2d2d2;"></div>
<div style="position:absolute;left:0px;top:242px;width:25px;height:1px;background:#c4c4c4;"></div>
<div style="position:absolute;left:0px;top:262px;width:25px;height:1px;background:#c4c4c4;"></div>
<div style="position:absolute;left:0px;top:282px;width:25px;height:1px;background:#c4c4c4;"></div>
<div style="position:absolute;left:0px;top:302px;width:25px;height:1px;background:#c4c4c4;"></div>
<div style="position:absolute;left:0px;top:322px;width:25px;height:1px;background:#c4c4c4;"></div>
<div style="position:absolute;left:0px;top:342px;width:25px;height:1px;background:#c4c4c4;"></div>
<div style="position:absolute;left:0px;top:362px;width:25px;height:1px;background:#c4c4c4;"></div>
<div style="position:absolute;left:0px;top:382px;width:25px;height:1px;background:#c4c4c4;"></div>
<div style="position:absolute;left:0px;top:402px;width:25px;height:1px;background:#c4c4c4;"></div>
<div style="position:absolute;left:0px;top:422px;width:25px;height:1px;background:#c4c4c4;"></div>
<div style="position:absolute;left:0px;top:443px;width:25px;height:1px;background:#c4c4c4;"></div>
<div style="position:absolute;left:0px;top:463px;width:25px;height:1px;background:#c4c4c4;"></div>
<div style="position:absolute;left:0px;top:483px;width:25px;height:1px;background:#c4c4c4;"></div>
<div style="position:absolute;left:0px;top:503px;width:25px;height:1px;background:#c4c4c4;"></div>
<div style="position:absolute;left:0px;top:523px;width:25px;height:1px;background:#c4c4c4;"></div>
<div style="position:absolute;left:0px;top:544px;width:25px;height:1px;background:#c4c4c4;"></div>
<div style="position:absolute;left:0px;top:564px;width:25px;height:1px;background:#c4c4c4;"></div>
<div style="position:absolute;left:0px;top:584px;width:25px;height:1px;background:#c4c4c4;"></div>
<div style="position:absolute;left:0px;top:604px;width:25px;height:1px;background:#c4c4c4;"></div>
<div style="position:absolute;left:0px;top:623px;width:25px;height:1px;background:#c4c4c4;"></div>
<div style="position:absolute;left:0px;top:644px;width:25px;height:1px;background:#c4c4c4;"></div>
<div style="position:absolute;left:25px;top:222px;width:1px;height:423px;background:#a8a8a8;"></div>
<div style="position:absolute;left:24px;top:342px;width:2px;height:21px;background:#217346;"></div>
<div class="t" style="left:1.20px;width:24px;text-align:center;top:228.04px;font-size:12px;color:#222;">1</div>
<div class="t" style="left:1.20px;width:24px;text-align:center;top:248.04px;font-size:12px;color:#222;">2</div>
<div class="t" style="left:1.20px;width:24px;text-align:center;top:268.04px;font-size:12px;color:#222;">3</div>
<div class="t" style="left:1.20px;width:24px;text-align:center;top:288.04px;font-size:12px;color:#222;">4</div>
<div class="t" style="left:1.20px;width:24px;text-align:center;top:308.04px;font-size:12px;color:#222;">5</div>
<div class="t" style="left:1.20px;width:24px;text-align:center;top:328.04px;font-size:12px;color:#222;">6</div>
<div class="t" style="left:1.20px;width:24px;text-align:center;top:348.04px;font-size:12px;color:#1e5a35;">7</div>
<div class="t" style="left:1.20px;width:24px;text-align:center;top:368.04px;font-size:12px;color:#222;">8</div>
<div class="t" style="left:1.20px;width:24px;text-align:center;top:388.04px;font-size:12px;color:#222;">9</div>
<div class="t" style="left:1.20px;width:24px;text-align:center;top:408.04px;font-size:12px;color:#222;">10</div>
<div class="t" style="left:1.20px;width:24px;text-align:center;top:429.04px;font-size:12px;color:#222;">11</div>
<div class="t" style="left:1.20px;width:24px;text-align:center;top:449.04px;font-size:12px;color:#222;">12</div>
<div class="t" style="left:1.20px;width:24px;text-align:center;top:469.04px;font-size:12px;color:#222;">13</div>
<div class="t" style="left:1.20px;width:24px;text-align:center;top:489.04px;font-size:12px;color:#222;">14</div>
<div class="t" style="left:1.20px;width:24px;text-align:center;top:509.04px;font-size:12px;color:#222;">15</div>
<div class="t" style="left:1.20px;width:24px;text-align:center;top:530.04px;font-size:12px;color:#222;">16</div>
<div class="t" style="left:1.20px;width:24px;text-align:center;top:550.04px;font-size:12px;color:#222;">17</div>
<div class="t" style="left:1.20px;width:24px;text-align:center;top:570.04px;font-size:12px;color:#222;">18</div>
<div class="t" style="left:1.20px;width:24px;text-align:center;top:590.04px;font-size:12px;color:#222;">19</div>
<div class="t" style="left:1.20px;width:24px;text-align:center;top:609.04px;font-size:12px;color:#222;">20</div>
<div class="t" style="left:1.20px;width:24px;text-align:center;top:630.04px;font-size:12px;color:#222;">21</div>
<div style="position:absolute;left:88px;top:223px;width:1px;height:19px;background:#fff;"></div>
<div style="position:absolute;left:88px;top:263px;width:1px;height:19px;background:#fff;"></div>
<div style="position:absolute;left:406px;top:423px;width:1px;height:20px;background:#fff;"></div>
<div style="position:absolute;left:88px;top:524px;width:1px;height:20px;background:#fff;"></div>
<div style="position:absolute;left:596px;top:524px;width:1px;height:20px;background:#fff;"></div>
<div style="position:absolute;left:26px;top:223px;width:718px;height:19px;overflow:hidden;"><div class="t" style="font-size:12.8px;color:#000;top:4.16px;-webkit-text-stroke:0.1px #000;letter-spacing:-0.449px;left:1.50px;">SUMMARY OUTPUT</div></div>
<div style="position:absolute;left:26px;top:263px;width:718px;height:19px;overflow:hidden;"><div class="t" style="font-size:13.5px;color:#000;top:3.57px;-webkit-text-stroke:0.1px #000;letter-spacing:-0.237px;font-style:italic;left:1.50px;">Regression Statistics</div></div>
<div style="position:absolute;left:26px;top:283px;width:62px;height:19px;overflow:hidden;"><div class="t" style="font-size:13.5px;color:#000;top:3.57px;-webkit-text-stroke:0.1px #000;letter-spacing:0.611px;left:1.50px;">Multiple R</div></div>
<div style="position:absolute;left:89px;top:283px;width:63px;height:19px;overflow:hidden;"><div class="t" style="font-size:12.5px;color:#000;top:4.42px;-webkit-text-stroke:0.1px #000;right:2.50px;">0.9156</div></div>
<div style="position:absolute;left:26px;top:303px;width:62px;height:19px;overflow:hidden;"><div class="t" style="font-size:13.5px;color:#000;top:3.57px;-webkit-text-stroke:0.1px #000;letter-spacing:-0.648px;left:1.50px;">R Square</div></div>
<div style="position:absolute;left:89px;top:303px;width:63px;height:19px;overflow:hidden;"><div class="t" style="font-size:12.5px;color:#000;top:4.42px;-webkit-text-stroke:0.1px #000;right:2.50px;">0.838323</div></div>
<div style="position:absolute;left:26px;top:323px;width:62px;height:19px;overflow:hidden;"><div class="t" style="font-size:13.5px;color:#000;top:3.57px;-webkit-text-stroke:0.1px #000;letter-spacing:0.137px;left:1.50px;">Adjusted R Square</div></div>
<div style="position:absolute;left:89px;top:323px;width:63px;height:19px;overflow:hidden;"><div class="t" style="font-size:12.5px;color:#000;top:4.42px;-webkit-text-stroke:0.1px #000;right:2.50px;">0.79423</div></div>
<div style="position:absolute;left:26px;top:343px;width:62px;height:19px;overflow:hidden;"><div class="t" style="font-size:13.5px;color:#000;top:3.57px;-webkit-text-stroke:0.1px #000;letter-spacing:-0.385px;left:1.50px;">Standard Error</div></div>
<div style="position:absolute;left:89px;top:343px;width:63px;height:19px;overflow:hidden;"><div class="t" style="font-size:12.5px;color:#000;top:4.42px;-webkit-text-stroke:0.1px #000;right:2.50px;">73.81796</div></div>
<div style="position:absolute;left:26px;top:363px;width:62px;height:19px;overflow:hidden;"><div class="t" style="font-size:13.5px;color:#000;top:3.57px;-webkit-text-stroke:0.1px #000;left:1.50px;">Observations</div></div>
<div style="position:absolute;left:89px;top:363px;width:63px;height:19px;overflow:hidden;"><div class="t" style="font-size:12.5px;color:#000;top:4.42px;-webkit-text-stroke:0.1px #000;right:2.50px;">15</div></div>
<div style="position:absolute;left:26px;top:403px;width:718px;height:19px;overflow:hidden;"><div class="t" style="font-size:13.5px;color:#000;top:3.57px;-webkit-text-stroke:0.1px #000;left:1.50px;">ANOVA</div></div>
<div style="position:absolute;left:89px;top:423px;width:63px;height:20px;overflow:hidden;"><div class="t" style="font-size:13px;color:#000;top:5.00px;-webkit-text-stroke:0.1px #000;font-style:italic;left:-88.50px;width:240px;text-align:center;">df</div></div>
<div style="position:absolute;left:153px;top:423px;width:62px;height:20px;overflow:hidden;"><div class="t" style="font-size:13px;color:#000;top:5.00px;-webkit-text-stroke:0.1px #000;font-style:italic;left:-89.00px;width:240px;text-align:center;">SS</div></div>
<div style="position:absolute;left:216px;top:423px;width:63px;height:20px;overflow:hidden;"><div class="t" style="font-size:13px;color:#000;top:5.00px;-webkit-text-stroke:0.1px #000;font-style:italic;left:-88.50px;width:240px;text-align:center;">MS</div></div>
<div style="position:absolute;left:280px;top:423px;width:62px;height:20px;overflow:hidden;"><div class="t" style="font-size:13px;color:#000;top:5.00px;-webkit-text-stroke:0.1px #000;font-style:italic;left:-89.00px;width:240px;text-align:center;">F</div></div>
<div style="position:absolute;left:343px;top:423px;width:401px;height:20px;overflow:hidden;"><div class="t" style="font-size:13px;color:#000;top:5.00px;-webkit-text-stroke:0.1px #000;letter-spacing:-0.097px;font-style:italic;left:-88.55px;width:240px;text-align:center;">Significance F</div></div>
<div style="position:absolute;left:26px;top:444px;width:62px;height:19px;overflow:hidden;"><div class="t" style="font-size:13.5px;color:#000;top:3.57px;-webkit-text-stroke:0.1px #000;left:1.50px;">Regression</div></div>
<div style="position:absolute;left:89px;top:444px;width:63px;height:19px;overflow:hidden;"><div class="t" style="font-size:12.5px;color:#000;top:4.42px;-webkit-text-stroke:0.1px #000;right:2.50px;">3</div></div>
<div style="position:absolute;left:153px;top:444px;width:62px;height:19px;overflow:hidden;"><div class="t" style="font-size:12.5px;color:#000;top:4.42px;-webkit-text-stroke:0.1px #000;right:2.50px;">310800</div></div>
<div style="position:absolute;left:216px;top:444px;width:63px;height:19px;overflow:hidden;"><div class="t" style="font-size:12.5px;color:#000;top:4.42px;-webkit-text-stroke:0.1px #000;right:2.50px;">103600</div></div>
<div style="position:absolute;left:280px;top:444px;width:62px;height:19px;overflow:hidden;"><div class="t" style="font-size:12.5px;color:#000;top:4.42px;-webkit-text-stroke:0.1px #000;right:2.50px;">19.01235</div></div>
<div style="position:absolute;left:343px;top:444px;width:63px;height:19px;overflow:hidden;"><div class="t" style="font-size:12.5px;color:#000;top:4.42px;-webkit-text-stroke:0.1px #000;right:2.50px;">0.000116</div></div>
<div style="position:absolute;left:26px;top:464px;width:62px;height:19px;overflow:hidden;"><div class="t" style="font-size:13.5px;color:#000;top:3.57px;-webkit-text-stroke:0.1px #000;letter-spacing:-0.204px;left:1.50px;">Residual</div></div>
<div style="position:absolute;left:89px;top:464px;width:63px;height:19px;overflow:hidden;"><div class="t" style="font-size:12.5px;color:#000;top:4.42px;-webkit-text-stroke:0.1px #000;right:2.50px;">11</div></div>
<div style="position:absolute;left:153px;top:464px;width:62px;height:19px;overflow:hidden;"><div class="t" style="font-size:12.5px;color:#000;top:4.42px;-webkit-text-stroke:0.1px #000;right:2.50px;">59940</div></div>
<div style="position:absolute;left:216px;top:464px;width:63px;height:19px;overflow:hidden;"><div class="t" style="font-size:12.5px;color:#000;top:4.42px;-webkit-text-stroke:0.1px #000;right:2.50px;">5449.091</div></div>
<div style="position:absolute;left:26px;top:484px;width:62px;height:19px;overflow:hidden;"><div class="t" style="font-size:13.5px;color:#000;top:3.57px;-webkit-text-stroke:0.1px #000;letter-spacing:0.247px;left:1.50px;">Total</div></div>
<div style="position:absolute;left:89px;top:484px;width:63px;height:19px;overflow:hidden;"><div class="t" style="font-size:12.5px;color:#000;top:4.42px;-webkit-text-stroke:0.1px #000;right:2.50px;">14</div></div>
<div style="position:absolute;left:153px;top:484px;width:62px;height:19px;overflow:hidden;"><div class="t" style="font-size:12.5px;color:#000;top:4.42px;-webkit-text-stroke:0.1px #000;right:2.50px;">370740</div></div>
<div style="position:absolute;left:26px;top:524px;width:126px;height:20px;overflow:hidden;"><div class="t" style="font-size:13px;color:#000;top:5.00px;-webkit-text-stroke:0.1px #000;letter-spacing:0.252px;font-style:italic;left:-25.37px;width:240px;text-align:center;">Coefficients</div></div>
<div style="position:absolute;left:153px;top:524px;width:62px;height:20px;overflow:hidden;"><div class="t" style="font-size:13px;color:#000;top:5.00px;-webkit-text-stroke:0.1px #000;letter-spacing:-0.131px;font-style:italic;left:-89.07px;width:240px;text-align:center;">Standard Error</div></div>
<div style="position:absolute;left:216px;top:524px;width:63px;height:20px;overflow:hidden;"><div class="t" style="font-size:13px;color:#000;top:5.00px;-webkit-text-stroke:0.1px #000;letter-spacing:0.198px;font-style:italic;left:-88.40px;width:240px;text-align:center;">t Stat</div></div>
<div style="position:absolute;left:280px;top:524px;width:62px;height:20px;overflow:hidden;"><div class="t" style="font-size:13px;color:#000;top:5.00px;-webkit-text-stroke:0.1px #000;letter-spacing:0.036px;font-style:italic;left:-88.98px;width:240px;text-align:center;">P-value</div></div>
<div style="position:absolute;left:343px;top:524px;width:63px;height:20px;overflow:hidden;"><div class="t" style="font-size:13px;color:#000;top:5.00px;-webkit-text-stroke:0.1px #000;letter-spacing:0.120px;font-style:italic;left:-88.44px;width:240px;text-align:center;">Lower 95%</div></div>
<div style="position:absolute;left:407px;top:524px;width:62px;height:20px;overflow:hidden;"><div class="t" style="font-size:13px;color:#000;top:5.00px;-webkit-text-stroke:0.1px #000;letter-spacing:0.120px;font-style:italic;left:-88.94px;width:240px;text-align:center;">Upper 95%</div></div>
<div style="position:absolute;left:470px;top:524px;width:63px;height:20px;overflow:hidden;"><div class="t" style="font-size:13px;color:#000;top:5.00px;-webkit-text-stroke:0.1px #000;letter-spacing:-0.288px;font-style:italic;left:-88.64px;width:240px;text-align:center;">Lower 95.0%</div></div>
<div style="position:absolute;left:534px;top:524px;width:210px;height:20px;overflow:hidden;"><div class="t" style="font-size:13px;color:#000;top:5.00px;-webkit-text-stroke:0.1px #000;letter-spacing:-0.288px;font-style:italic;left:-89.14px;width:240px;text-align:center;">Upper 95.0%</div></div>
<div style="position:absolute;left:26px;top:545px;width:62px;height:19px;overflow:hidden;"><div class="t" style="font-size:13.5px;color:#000;top:3.57px;-webkit-text-stroke:0.1px #000;letter-spacing:0.421px;left:1.50px;">Intercept</div></div>
<div style="position:absolute;left:89px;top:545px;width:63px;height:19px;overflow:hidden;"><div class="t" style="font-size:12.5px;color:#000;top:4.42px;-webkit-text-stroke:0.1px #000;right:2.50px;">-108</div></div>
<div style="position:absolute;left:153px;top:545px;width:62px;height:19px;overflow:hidden;"><div class="t" style="font-size:12.5px;color:#000;top:4.42px;-webkit-text-stroke:0.1px #000;right:2.50px;">52.19718</div></div>
<div style="position:absolute;left:216px;top:545px;width:63px;height:19px;overflow:hidden;"><div class="t" style="font-size:12.5px;color:#000;top:4.42px;-webkit-text-stroke:0.1px #000;right:2.50px;">-2.06908</div></div>
<div style="position:absolute;left:280px;top:545px;width:62px;height:19px;overflow:hidden;"><div class="t" style="font-size:12.5px;color:#000;top:4.42px;-webkit-text-stroke:0.1px #000;right:2.50px;">0.062873</div></div>
<div style="position:absolute;left:343px;top:545px;width:63px;height:19px;overflow:hidden;"><div class="t" style="font-size:12.5px;color:#000;top:4.42px;-webkit-text-stroke:0.1px #000;right:2.50px;">-222.885</div></div>
<div style="position:absolute;left:407px;top:545px;width:62px;height:19px;overflow:hidden;"><div class="t" style="font-size:12.5px;color:#000;top:4.42px;-webkit-text-stroke:0.1px #000;right:2.50px;">6.885216</div></div>
<div style="position:absolute;left:470px;top:545px;width:63px;height:19px;overflow:hidden;"><div class="t" style="font-size:12.5px;color:#000;top:4.42px;-webkit-text-stroke:0.1px #000;right:2.50px;">-222.885</div></div>
<div style="position:absolute;left:534px;top:545px;width:62px;height:19px;overflow:hidden;"><div class="t" style="font-size:12.5px;color:#000;top:4.42px;-webkit-text-stroke:0.1px #000;right:2.50px;">6.885216</div></div>
<div style="position:absolute;left:26px;top:565px;width:62px;height:19px;overflow:hidden;"><div class="t" style="font-size:13.5px;color:#000;top:3.57px;-webkit-text-stroke:0.1px #000;left:1.50px;">Dum1</div></div>
<div style="position:absolute;left:89px;top:565px;width:63px;height:19px;overflow:hidden;"><div class="t" style="font-size:12.5px;color:#000;top:4.42px;-webkit-text-stroke:0.1px #000;right:2.50px;">27</div></div>
<div style="position:absolute;left:153px;top:565px;width:62px;height:19px;overflow:hidden;"><div class="t" style="font-size:12.5px;color:#000;top:4.42px;-webkit-text-stroke:0.1px #000;right:2.50px;">46.68658</div></div>
<div style="position:absolute;left:216px;top:565px;width:63px;height:19px;overflow:hidden;"><div class="t" style="font-size:12.5px;color:#000;top:4.42px;-webkit-text-stroke:0.1px #000;right:2.50px;">0.578325</div></div>
<div style="position:absolute;left:280px;top:565px;width:62px;height:19px;overflow:hidden;"><div class="t" style="font-size:12.5px;color:#000;top:4.42px;-webkit-text-stroke:0.1px #000;right:2.50px;">0.574694</div></div>
<div style="position:absolute;left:343px;top:565px;width:63px;height:19px;overflow:hidden;"><div class="t" style="font-size:12.5px;color:#000;top:4.42px;-webkit-text-stroke:0.1px #000;right:2.50px;">-75.7565</div></div>
<div style="position:absolute;left:407px;top:565px;width:62px;height:19px;overflow:hidden;"><div class="t" style="font-size:12.5px;color:#000;top:4.42px;-webkit-text-stroke:0.1px #000;right:2.50px;">129.7565</div></div>
<div style="position:absolute;left:470px;top:565px;width:63px;height:19px;overflow:hidden;"><div class="t" style="font-size:12.5px;color:#000;top:4.42px;-webkit-text-stroke:0.1px #000;right:2.50px;">-75.7565</div></div>
<div style="position:absolute;left:534px;top:565px;width:62px;height:19px;overflow:hidden;"><div class="t" style="font-size:12.5px;color:#000;top:4.42px;-webkit-text-stroke:0.1px #000;right:2.50px;">129.7565</div></div>
<div style="position:absolute;left:26px;top:585px;width:62px;height:19px;overflow:hidden;"><div class="t" style="font-size:13.5px;color:#000;top:3.57px;-webkit-text-stroke:0.1px #000;left:1.50px;">Dum2</div></div>
<div style="position:absolute;left:89px;top:585px;width:63px;height:19px;overflow:hidden;"><div class="t" style="font-size:12.5px;color:#000;top:4.42px;-webkit-text-stroke:0.1px #000;right:2.50px;">297</div></div>
<div style="position:absolute;left:153px;top:585px;width:62px;height:19px;overflow:hidden;"><div class="t" style="font-size:12.5px;color:#000;top:4.42px;-webkit-text-stroke:0.1px #000;right:2.50px;">46.68658</div></div>
<div style="position:absolute;left:216px;top:585px;width:63px;height:19px;overflow:hidden;"><div class="t" style="font-size:12.5px;color:#000;top:4.42px;-webkit-text-stroke:0.1px #000;right:2.50px;">6.361572</div></div>
<div style="position:absolute;left:280px;top:585px;width:62px;height:19px;overflow:hidden;"><div class="t" style="font-size:12.5px;color:#000;top:4.42px;-webkit-text-stroke:0.1px #000;right:2.50px;">5.36E-05</div></div>
<div style="position:absolute;left:343px;top:585px;width:63px;height:19px;overflow:hidden;"><div class="t" style="font-size:12.5px;color:#000;top:4.42px;-webkit-text-stroke:0.1px #000;right:2.50px;">194.2435</div></div>
<div style="position:absolute;left:407px;top:585px;width:62px;height:19px;overflow:hidden;"><div class="t" style="font-size:12.5px;color:#000;top:4.42px;-webkit-text-stroke:0.1px #000;right:2.50px;">399.7565</div></div>
<div style="position:absolute;left:470px;top:585px;width:63px;height:19px;overflow:hidden;"><div class="t" style="font-size:12.5px;color:#000;top:4.42px;-webkit-text-stroke:0.1px #000;right:2.50px;">194.2435</div></div>
<div style="position:absolute;left:534px;top:585px;width:62px;height:19px;overflow:hidden;"><div class="t" style="font-size:12.5px;color:#000;top:4.42px;-webkit-text-stroke:0.1px #000;right:2.50px;">399.7565</div></div>
<div style="position:absolute;left:26px;top:605px;width:62px;height:18px;overflow:hidden;"><div class="t" style="font-size:13.5px;color:#000;top:2.57px;-webkit-text-stroke:0.1px #000;left:1.50px;">Conscientiousness</div></div>
<div style="position:absolute;left:89px;top:605px;width:63px;height:18px;overflow:hidden;"><div class="t" style="font-size:12.5px;color:#000;top:3.42px;-webkit-text-stroke:0.1px #000;right:2.50px;">37</div></div>
<div style="position:absolute;left:153px;top:605px;width:62px;height:18px;overflow:hidden;"><div class="t" style="font-size:12.5px;color:#000;top:3.42px;-webkit-text-stroke:0.1px #000;right:2.50px;">13.47725</div></div>
<div style="position:absolute;left:216px;top:605px;width:63px;height:18px;overflow:hidden;"><div class="t" style="font-size:12.5px;color:#000;top:3.42px;-webkit-text-stroke:0.1px #000;right:2.50px;">2.745366</div></div>
<div style="position:absolute;left:280px;top:605px;width:62px;height:18px;overflow:hidden;"><div class="t" style="font-size:12.5px;color:#000;top:3.42px;-webkit-text-stroke:0.1px #000;right:2.50px;">0.019048</div></div>
<div style="position:absolute;left:343px;top:605px;width:63px;height:18px;overflow:hidden;"><div class="t" style="font-size:12.5px;color:#000;top:3.42px;-webkit-text-stroke:0.1px #000;right:2.50px;">7.336765</div></div>
<div style="position:absolute;left:407px;top:605px;width:62px;height:18px;overflow:hidden;"><div class="t" style="font-size:12.5px;color:#000;top:3.42px;-webkit-text-stroke:0.1px #000;right:2.50px;">66.66324</div></div>
<div style="position:absolute;left:470px;top:605px;width:63px;height:18px;overflow:hidden;"><div class="t" style="font-size:12.5px;color:#000;top:3.42px;-webkit-text-stroke:0.1px #000;right:2.50px;">7.336765</div></div>
<div style="position:absolute;left:534px;top:605px;width:62px;height:18px;overflow:hidden;"><div class="t" style="font-size:12.5px;color:#000;top:3.42px;-webkit-text-stroke:0.1px #000;right:2.50px;">66.66324</div></div>
<div style="position:absolute;left:26px;top:262px;width:127px;height:2px;background:#000;"></div>
<div style="position:absolute;left:26px;top:282px;width:127px;height:1px;background:#000;"></div>
<div style="position:absolute;left:26px;top:382px;width:127px;height:2px;background:#000;"></div>
<div style="position:absolute;left:26px;top:422px;width:381px;height:2px;background:#000;"></div>
<div style="position:absolute;left:26px;top:443px;width:381px;height:1px;background:#000;"></div>
<div style="position:absolute;left:26px;top:503px;width:381px;height:2px;background:#000;"></div>
<div style="position:absolute;left:26px;top:523px;width:571px;height:2px;background:#000;"></div>
<div style="position:absolute;left:26px;top:544px;width:571px;height:1px;background:#000;"></div>
<div style="position:absolute;left:26px;top:623px;width:571px;height:2px;background:#000;"></div>
<div style="position:absolute;left:468px;top:341px;width:67px;height:22px;border:2px solid #217346;box-sizing:border-box;"></div>
<div style="position:absolute;left:530px;top:359px;width:7px;height:6px;background:#fff;"></div>
<div style="position:absolute;left:531px;top:360px;width:5px;height:5px;background:#217346;"></div>
<div style="position:absolute;left:744px;top:222px;width:1px;height:423px;background:#ababab;"></div>
<div style="position:absolute;left:745px;top:203px;width:21px;height:442px;background:#e6e6e6;"></div>
<div style="position:absolute;left:748px;top:205px;width:15px;height:15px;background:#fff;border:1px solid #b4b4b4;box-sizing:border-box;"></div>
<svg style="position:absolute;left:752px;top:209.5px;" width="7" height="4.5" viewBox="0 0 7 4.5"><path d="M0 4.5L3.5 0L7 4.5z" fill="#6f6f6f"/></svg>
<div style="position:absolute;left:748px;top:221px;width:15px;height:418px;background:#fff;border:1px solid #ababab;box-sizing:border-box;"></div>
<div style="position:absolute;left:0px;top:644px;width:744px;height:1px;background:#c8c8c8;"></div>
</body></html>
